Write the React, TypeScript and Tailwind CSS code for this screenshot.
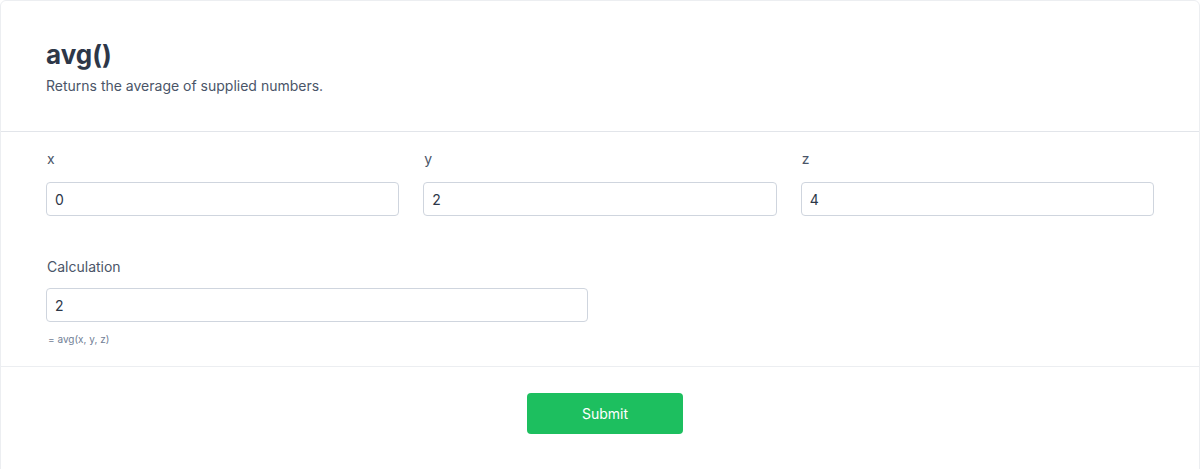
import { useState } from "react"

function Field({
  label,
  value,
  onChange,
}: {
  label: string
  value: string
  onChange: (v: string) => void
}) {
  return (
    <div className="flex flex-col">
      <label className="text-sm leading-5 text-[#4a5568] pl-[1px]">{label}</label>
      <input
        type="text"
        value={value}
        onChange={(e) => onChange(e.target.value)}
        className="mt-[13px] h-[34px] w-full rounded border border-[#cfd5de] bg-white px-2 text-sm text-[#2d3748] outline-none"
      />
    </div>
  )
}

export default function App() {
  const [vals, setVals] = useState({ x: "0", y: "2", z: "4" })

  const nums = [vals.x, vals.y, vals.z].map((v) => parseFloat(v)).filter((n) => !isNaN(n))
  const avg = nums.length ? nums.reduce((a, b) => a + b, 0) / nums.length : 0

  const handleChange = (field: string, value: string) => {
    setVals((prev) => ({ ...prev, [field]: value }))
  }

  return (
    <div className="min-h-[469px] bg-white font-['Inter',sans-serif]">
      <div className="min-h-[480px] rounded-md border border-[#eceef1]">
        {/* Header */}
        <div className="border-b border-[#e2e5ea] px-[45px] pt-[38px] pb-[35px]">
          <h1 className="text-[26px] font-bold leading-8 text-[#2d3748]">avg()</h1>
          <p className="mt-[5px] text-sm leading-5 text-[#4a5568]">
            Returns the average of supplied numbers.
          </p>
        </div>

        {/* Inputs */}
        <div className="border-b border-[#eceef1] px-[45px] pt-[17px] pb-[19px]">
          <div className="grid grid-cols-3 gap-6">
            <Field label="x" value={vals.x} onChange={(v) => handleChange("x", v)} />
            <Field label="y" value={vals.y} onChange={(v) => handleChange("y", v)} />
            <Field label="z" value={vals.z} onChange={(v) => handleChange("z", v)} />
          </div>

          <div className="mt-[41px] grid grid-cols-2 gap-6">
            <div className="flex flex-col">
              <label className="pl-[1px] text-sm leading-5 text-[#4a5568]">Calculation</label>
              <input
                type="text"
                readOnly
                value={String(Math.round(avg * 100) / 100)}
                className="mt-[11px] h-[34px] w-full rounded border border-[#cfd5de] bg-white px-2 text-sm text-[#2d3748] outline-none"
              />
              <span className="mt-[9px] pl-[2px] text-[10px] leading-4 text-[#718096]">= avg(x, y, z)</span>
            </div>
          </div>
        </div>

        {/* Footer */}
        <div className="flex justify-center pt-[26px] pb-8 pl-[10px]">
          <button
            type="submit"
            className="h-[41px] w-[156px] rounded bg-[#1dbf5f] text-sm text-white"
          >
            Submit
          </button>
        </div>
      </div>
    </div>
  )
}
